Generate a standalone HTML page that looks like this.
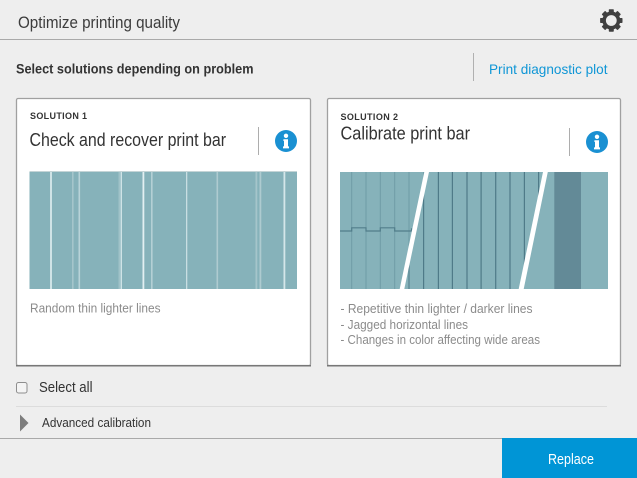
<!DOCTYPE html>
<html>
<head>
<meta charset="utf-8">
<style>
html,body{margin:0;padding:0;width:637px;height:478px;overflow:hidden;background:#eeeeee}
svg{display:block}
text{font-family:"Liberation Sans",sans-serif}
</style>
</head>
<body>
<svg width="637" height="478" viewBox="0 0 637 478" xmlns="http://www.w3.org/2000/svg">
<defs>
<clipPath id="left"><polygon points="340,172 424.5,172 399.8,289 340,289"/></clipPath>
<clipPath id="mid"><polygon points="428.5,172 543.5,172 519,289 404,289"/></clipPath>
<g id="info"><circle cx="0" cy="0" r="11" fill="#1a90d2"/><circle cx="0" cy="-5.200" r="2.200" fill="#fff"/><path d="M-2.600 -1.800H2V5.400H3V7.400H-3V5.400H-2V0H-2.600Z" fill="#fff"/></g>
</defs>
<rect width="637" height="478" fill="#eeeeee"/>

<!-- header -->
<text x="18" y="28" font-size="17" fill="#3c3c3c" textLength="162" lengthAdjust="spacingAndGlyphs">Optimize printing quality</text>
<g fill="#404040" transform="translate(611.300 20.500)">
<circle r="7.200" fill="none" stroke="#404040" stroke-width="3.600"/>
<rect x="-2.500" y="-11.200" width="5" height="3.400" rx=".7"/>
<rect x="-2.500" y="-11.200" width="5" height="3.400" rx=".7" transform="rotate(45)"/>
<rect x="-2.500" y="-11.200" width="5" height="3.400" rx=".7" transform="rotate(90)"/>
<rect x="-2.500" y="-11.200" width="5" height="3.400" rx=".7" transform="rotate(135)"/>
<rect x="-2.500" y="-11.200" width="5" height="3.400" rx=".7" transform="rotate(180)"/>
<rect x="-2.500" y="-11.200" width="5" height="3.400" rx=".7" transform="rotate(225)"/>
<rect x="-2.500" y="-11.200" width="5" height="3.400" rx=".7" transform="rotate(270)"/>
<rect x="-2.500" y="-11.200" width="5" height="3.400" rx=".7" transform="rotate(315)"/>
</g>
<rect x="0" y="39" width="637" height="1" fill="#a9a9a9"/>

<text x="16" y="73.500" font-size="13.500" font-weight="700" fill="#333" textLength="237.500" lengthAdjust="spacingAndGlyphs">Select solutions depending on problem</text>
<rect x="473" y="53" width="1" height="28" fill="#b0b0b0"/>
<text x="489" y="74" font-size="14" fill="#0f96d6" textLength="118.500" lengthAdjust="spacingAndGlyphs">Print diagnostic plot</text>

<!-- card 1 -->
<rect x="16.500" y="98.500" width="294" height="267" rx="1.500" fill="#fff" stroke="#a0a0a0" stroke-width="1.300"/>
<rect x="16" y="365" width="295" height="1.500" fill="#777"/>
<text x="30" y="119" font-size="9" font-weight="700" fill="#333" textLength="57" lengthAdjust="spacing">SOLUTION 1</text>
<text x="29.500" y="146" font-size="18.500" fill="#333" textLength="196.500" lengthAdjust="spacingAndGlyphs">Check and recover print bar</text>
<rect x="258" y="127" width="1" height="28" fill="#adadad"/>
<use href="#info" x="286" y="141"/>

<rect x="29.500" y="171.500" width="267.500" height="117.500" fill="#86b2ba"/>
<rect x="29.500" y="171" width="267.500" height="1" fill="#c4d4d6"/>
<g fill="#b8d3d8">
<rect x="50" y="172" width="2" height="117" fill="#cfe3e6"/>
<rect x="72" y="172" width="1.600" height="117" fill="#a5c5cb"/>
<rect x="78.500" y="172" width="1.600" height="117"/>
<rect x="118.500" y="172" width="1.500" height="117" fill="#a0c2c8"/>
<rect x="120.500" y="172" width="1.500" height="117" fill="#cfe3e6"/>
<rect x="142.500" y="172" width="1.800" height="117" fill="#e2eff1"/>
<rect x="151" y="172" width="1.600" height="117" fill="#b4d0d5"/>
<rect x="186" y="172" width="1.300" height="117" fill="#c8dee2"/>
<rect x="216.500" y="172" width="1.600" height="117" fill="#aecbd0"/>
<rect x="255.500" y="172" width="1.800" height="117" fill="#a5c5cb"/>
<rect x="259.500" y="172" width="1.800" height="117" fill="#aecbd0"/>
<rect x="283.500" y="172" width="1.800" height="117" fill="#d4e6e9"/>
</g>
<text x="30" y="312.500" font-size="13" fill="#8b8b8b" textLength="130.500" lengthAdjust="spacingAndGlyphs">Random thin lighter lines</text>

<!-- card 2 -->
<rect x="327.500" y="98.500" width="293" height="267" rx="1.500" fill="#fff" stroke="#a0a0a0" stroke-width="1.300"/>
<rect x="327" y="365" width="294" height="1.500" fill="#777"/>
<text x="340.500" y="120" font-size="9" font-weight="700" fill="#333" textLength="57.500" lengthAdjust="spacing">SOLUTION 2</text>
<text x="340.500" y="139.500" font-size="18.500" fill="#333" textLength="129.500" lengthAdjust="spacingAndGlyphs">Calibrate print bar</text>
<rect x="569" y="128" width="1" height="28" fill="#adadad"/>
<use href="#info" x="597" y="142"/>

<rect x="340" y="172" width="268" height="117" fill="#86b2ba"/>
<rect x="554.300" y="172" width="26.700" height="117" fill="#638a97"/>
<g clip-path="url(#left)" fill="#6f9ca6">
<rect x="351.200" y="172" width="1" height="117"/>
<rect x="365.500" y="172" width="1" height="117"/>
<rect x="379.800" y="172" width="1" height="117"/>
<rect x="394.200" y="172" width="1" height="117"/>
<rect x="408.500" y="172" width="1" height="117"/>
<rect x="423.200" y="172" width="1" height="117"/>
</g>
<g clip-path="url(#mid)" fill="#4f7a88">
<rect x="408.500" y="172" width="1" height="117"/>
<rect x="423" y="172" width="1.200" height="117"/>
<rect x="437.800" y="172" width="1.200" height="117"/>
<rect x="451.800" y="172" width="1.200" height="117"/>
<rect x="466.400" y="172" width="1.200" height="117"/>
<rect x="480.500" y="172" width="1.200" height="117"/>
<rect x="495.100" y="172" width="1.200" height="117"/>
<rect x="509.400" y="172" width="1.200" height="117"/>
<rect x="523.800" y="172" width="1.200" height="117"/>
<rect x="538" y="172" width="1.200" height="117"/>
</g>
<path d="M340 231H351.700V227.800H366V231H380.300V227.800H394.700V231H411.500V228.200" fill="none" stroke="#527e8b" stroke-width="1.200"/>
<polygon points="424.300,172 429,172 404.300,289 399.700,289" fill="#fff"/>
<polygon points="543,172 547.800,172 523.700,289 518.700,289" fill="#fff"/>
<text x="340.500" y="313" font-size="13" fill="#8b8b8b" textLength="192" lengthAdjust="spacingAndGlyphs">- Repetitive thin lighter / darker lines</text>
<text x="340.500" y="329" font-size="13" fill="#8b8b8b" textLength="127.500" lengthAdjust="spacingAndGlyphs">- Jagged horizontal lines</text>
<text x="340.500" y="344" font-size="13" fill="#8b8b8b" textLength="199.500" lengthAdjust="spacingAndGlyphs">- Changes in color affecting wide areas</text>

<!-- bottom -->
<rect x="16.500" y="382.500" width="10.500" height="10.500" rx="2" fill="#f4f4f4" stroke="#8e8e8e"/>
<text x="39" y="392" font-size="14.500" fill="#333" textLength="53.500" lengthAdjust="spacingAndGlyphs">Select all</text>
<rect x="16" y="406" width="591" height="1" fill="#dcdcdc"/>
<polygon points="20,414.500 28.500,423 20,431.500" fill="#7d7d7d"/>
<text x="42" y="427" font-size="13" fill="#333" textLength="109" lengthAdjust="spacingAndGlyphs">Advanced calibration</text>
<rect x="0" y="438" width="637" height="1" fill="#a9a9a9"/>
<rect x="502" y="438" width="135" height="40" fill="#0095d6"/>
<text x="548" y="464" font-size="15" fill="#fff" textLength="46" lengthAdjust="spacingAndGlyphs">Replace</text>
</svg>
</body>
</html>
